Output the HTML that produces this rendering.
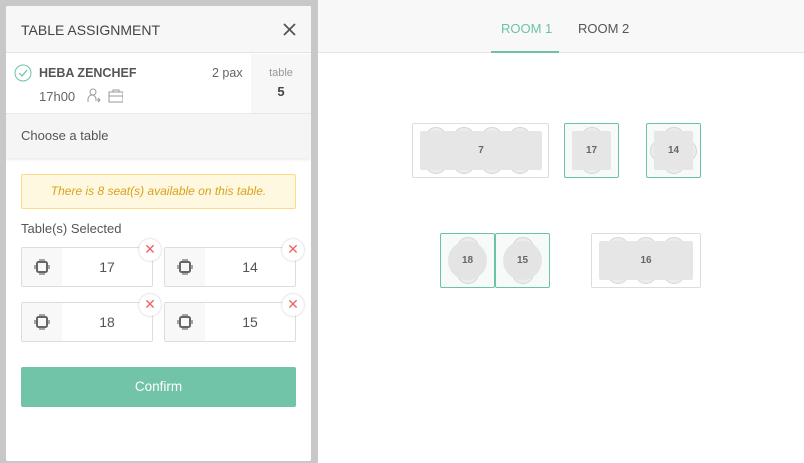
<!DOCTYPE html><html><head><style>
*{box-sizing:border-box;margin:0;padding:0}
body{width:804px;height:463px;overflow:hidden;font-family:"Liberation Sans",sans-serif;background:#fff;position:relative;color:#555}
.a{position:absolute}
.ov{left:0;top:0;width:318px;height:463px;background:#c8c8c8}
.panel{left:6px;top:6px;width:305px;height:455px;background:#fff;border-radius:2px;overflow:hidden}
.tb{border:1px solid #ddd;border-radius:2px}
.sel{border-color:#6cc3a3;background:#f6fbf9}
.seat{position:absolute;width:22px;height:22px;border-radius:50%;background:#ececec;border:1px solid #d6d6d6}
.top{background:#e6e6e6;border-radius:2px;position:absolute;display:flex;align-items:center;justify-content:center;font-size:10px;font-weight:bold;color:#666}
.box{position:absolute;width:132px;height:40px;border:1px solid #ddd;border-radius:2px;background:#fff}
.box .ic{position:absolute;left:0;top:0;width:40px;height:38px;background:#f8f8f8;display:flex;align-items:center;justify-content:center}
.box .n{position:absolute;left:40px;right:0;top:0;height:38px;line-height:38px;text-align:center;font-size:14px;color:#555}
.x{position:absolute;width:22px;height:22px;border-radius:50%;background:#fff;box-shadow:0 0 2px rgba(0,0,0,.25);color:#f06262;font-size:14px;text-align:center;line-height:21px}
</style></head><body>
<div class="a" style="left:318px;top:0;width:486px;height:53px;background:#f8f8f8;border-bottom:1px solid #e3e3e3"></div>
<div class="a" style="left:501px;top:21px;font-size:13px;color:#6cc3a3">ROOM 1</div>
<div class="a" style="left:491px;top:51px;width:68px;height:2px;background:#6cc3a3"></div>
<div class="a" style="left:578px;top:21px;font-size:13px;color:#555">ROOM 2</div>

<div class="a tb" style="left:412px;top:123px;width:137px;height:55px">
<div class="seat" style="left:12px;top:3px"></div><div class="seat" style="left:40px;top:3px"></div><div class="seat" style="left:68px;top:3px"></div><div class="seat" style="left:96px;top:3px"></div>
<div class="seat" style="left:12px;top:28px"></div><div class="seat" style="left:40px;top:28px"></div><div class="seat" style="left:68px;top:28px"></div><div class="seat" style="left:96px;top:28px"></div>
<div class="top" style="left:7px;top:7px;width:122px;height:39px">7</div></div>
<div class="a tb sel" style="left:564px;top:123px;width:55px;height:55px">
<div class="seat" style="left:16px;top:3px"></div><div class="seat" style="left:16px;top:28px"></div>
<div class="top" style="left:7px;top:7px;width:39px;height:39px">17</div></div>
<div class="a tb sel" style="left:646px;top:123px;width:55px;height:55px">
<div class="seat" style="left:16px;top:3px"></div><div class="seat" style="left:16px;top:28px"></div><div class="seat" style="left:3px;top:16px"></div><div class="seat" style="left:28px;top:16px"></div>
<div class="top" style="left:7px;top:7px;width:39px;height:39px">14</div></div>
<div class="a tb sel" style="left:440px;top:233px;width:55px;height:55px">
<div class="seat" style="left:16px;top:3px"></div><div class="seat" style="left:16px;top:28px"></div>
<div class="top" style="left:7px;top:7px;width:39px;height:39px;border-radius:50%;background:#e4e4e4">18</div></div>
<div class="a tb sel" style="left:495px;top:233px;width:55px;height:55px">
<div class="seat" style="left:16px;top:3px"></div><div class="seat" style="left:16px;top:28px"></div>
<div class="top" style="left:7px;top:7px;width:39px;height:39px;border-radius:50%;background:#e4e4e4">15</div></div>
<div class="a tb" style="left:591px;top:233px;width:110px;height:55px">
<div class="seat" style="left:15px;top:3px"></div><div class="seat" style="left:43px;top:3px"></div><div class="seat" style="left:71px;top:3px"></div>
<div class="seat" style="left:15px;top:28px"></div><div class="seat" style="left:43px;top:28px"></div><div class="seat" style="left:71px;top:28px"></div>
<div class="top" style="left:7px;top:7px;width:94px;height:39px">16</div></div>

<div class="a ov"></div>
<div class="a panel">
<div class="a" style="left:0;top:0;width:305px;height:47px;background:#f7f7f7;border-bottom:1px solid #e3e3e3"></div>
<div class="a" style="left:15px;top:16px;font-size:14px;color:#444">TABLE ASSIGNMENT</div>
<svg class="a" style="left:277px;top:17px" width="13" height="13"><path d="M1 1L12 12M12 1L1 12" stroke="#555" stroke-width="1.8"/></svg>
<div class="a" style="left:245px;top:48px;width:60px;height:59px;background:#f7f7f7"></div>
<svg class="a" style="left:8px;top:58px" width="18" height="18"><circle cx="9" cy="9" r="8" fill="none" stroke="#6cc3a3" stroke-width="1"/><path d="M5 9l3 3 5-6" fill="none" stroke="#6cc3a3" stroke-width="1.2"/></svg>
<div class="a" style="left:33px;top:60px;font-size:12.5px;font-weight:bold;color:#555">HEBA ZENCHEF</div>
<div class="a" style="left:206px;top:60px;font-size:12.5px;color:#666">2 pax</div>
<div class="a" style="left:33px;top:83px;font-size:13px;color:#666">17h00</div>
<svg class="a" style="left:81px;top:82px" width="36" height="16"><circle cx="6" cy="4" r="3" fill="none" stroke="#999"/><path d="M1 14v-3a4 4 0 0 1 8 0M8 12h5M11 10l2 2-2 2" fill="none" stroke="#999"/><rect x="22" y="4" width="14" height="10" fill="none" stroke="#999"/><path d="M26 4V2h6v2M22 8h14" fill="none" stroke="#999"/></svg>
<div class="a" style="left:245px;top:61px;width:60px;text-align:center;font-size:11px;color:#999">table</div>
<div class="a" style="left:245px;top:78px;width:60px;text-align:center;font-size:13px;font-weight:bold;color:#444">5</div>
<div class="a" style="left:0;top:107px;width:305px;height:45px;background:#f5f5f5;border-top:1px solid #e8e8e8;box-shadow:0 2px 3px rgba(0,0,0,.08)"></div>
<div class="a" style="left:15px;top:122px;font-size:13px;color:#555">Choose a table</div>
<div class="a" style="left:15px;top:168px;width:275px;height:35px;background:#fff8e1;border:1px solid #fbdc85;border-radius:2px;text-align:center;line-height:33px;font-size:12px;font-style:italic;color:#d9a21c">There is 8 seat(s) available on this table.</div>
<div class="a" style="left:15px;top:215px;font-size:13px;color:#555">Table(s) Selected</div>
</div>
<svg width="0" height="0" style="position:absolute"><defs><g id="ti"><rect x="3" y="3" width="10" height="10" rx="1.5" fill="none" stroke="#666" stroke-width="2"/><path d="M1 6v4M15 6v4M5 1h6M5 15h6" stroke="#888" stroke-width="1.5"/></g></defs></svg>
<div class="box" style="left:21px;top:247px"><div class="ic"><svg width="16" height="16"><use href="#ti"/></svg></div><div class="n">17</div></div>
<div class="box" style="left:164px;top:247px"><div class="ic"><svg width="16" height="16"><use href="#ti"/></svg></div><div class="n">14</div></div>
<div class="box" style="left:21px;top:302px"><div class="ic"><svg width="16" height="16"><use href="#ti"/></svg></div><div class="n">18</div></div>
<div class="box" style="left:164px;top:302px"><div class="ic"><svg width="16" height="16"><use href="#ti"/></svg></div><div class="n">15</div></div>
<div class="x" style="left:139px;top:239px">✕</div>
<div class="x" style="left:282px;top:239px">✕</div>
<div class="x" style="left:139px;top:294px">✕</div>
<div class="x" style="left:282px;top:294px">✕</div>
<div class="a" style="left:21px;top:367px;width:275px;height:40px;background:#71c4a7;border-radius:2px;color:#fff;text-align:center;line-height:40px;font-size:13.5px">Confirm</div>
</body></html>
